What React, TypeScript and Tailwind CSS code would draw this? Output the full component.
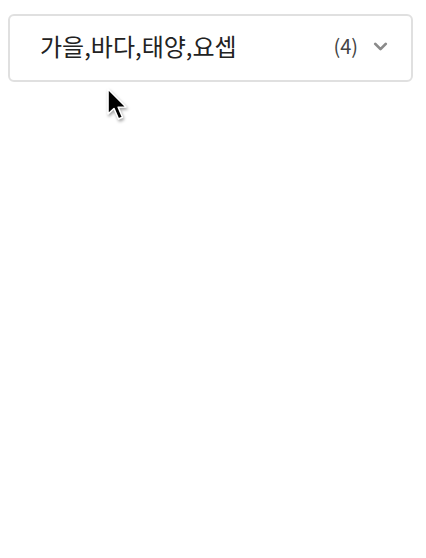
import { ChevronDown } from "lucide-react";

function Cursor() {
  return (
    <svg
      width="22"
      height="34"
      viewBox="0 0 22 34"
      className="absolute left-[106px] top-[88px] drop-shadow-[1px_2px_1.5px_rgba(0,0,0,0.35)]"
    >
      <path
        d="M2 1 L2 26 L8 20.5 L12.5 31 L16.5 29.2 L12.2 19.2 L20 19 Z"
        fill="#000"
        stroke="#fff"
        strokeWidth="1.6"
        strokeLinejoin="round"
      />
    </svg>
  );
}

export default function App() {
  return (
    <div className="relative min-h-[558px] w-full bg-white pl-2 pr-[13px] pt-[14px] font-['Noto_Sans_CJK_KR',sans-serif]">
      <button
        type="button"
        className="flex h-[68px] w-full items-center rounded-md border-2 border-[#e0e0e0] bg-white pb-[4px] pl-[30px] pr-[20px] text-left"
      >
        <span className="flex-1 whitespace-nowrap text-[24px] leading-[32px] text-[#222]">가을,바다,태양,요셉</span>
        <span className="text-[20px] leading-[28px] text-[#444]">(4)</span>
        <ChevronDown className="ml-[12px] size-[21px] text-[#8a8a8a]" strokeWidth={3.2} />
      </button>
      <Cursor />
    </div>
  );
}
